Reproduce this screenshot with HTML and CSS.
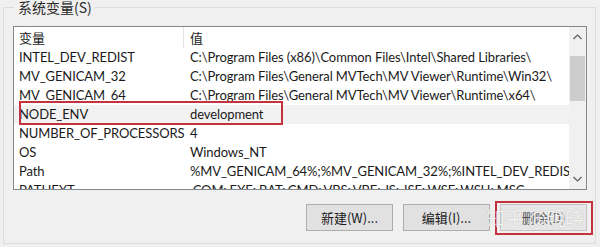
FILE: index.html
```html
<!DOCTYPE html>
<html lang="zh-CN">
	<head>
		<meta charset="UTF-8" />
		<title>系统变量</title>
		<link rel="stylesheet" href="styles.css">
	</head>
	<body>
		<fieldset class="group">
			<legend>系统变量(S)</legend>

			<div class="listbox">
				<div class="rows">
					<div class="row head">
						<span class="name">变量</span>
						<span class="value">值</span>
					</div>
					<div class="row">
						<span class="name">INTEL_DEV_REDIST</span>
						<span class="value">C:\Program Files (x86)\Common Files\Intel\Shared Libraries\</span>
					</div>
					<div class="row">
						<span class="name">MV_GENICAM_32</span>
						<span class="value">C:\Program Files\General MVTech\MV Viewer\Runtime\Win32\</span>
					</div>
					<div class="row">
						<span class="name">MV_GENICAM_64</span>
						<span class="value">C:\Program Files\General MVTech\MV Viewer\Runtime\x64\</span>
					</div>
					<div class="row selected">
						<span class="name">NODE_ENV</span>
						<span class="value">development</span>
						<span class="mark"></span>
					</div>
					<div class="row">
						<span class="name">NUMBER_OF_PROCESSORS</span>
						<span class="value">4</span>
					</div>
					<div class="row">
						<span class="name">OS</span>
						<span class="value">Windows_NT</span>
					</div>
					<div class="row">
						<span class="name">Path</span>
						<span class="value">%MV_GENICAM_64%;%MV_GENICAM_32%;%INTEL_DEV_REDIS...</span>
					</div>
					<div class="row">
						<span class="name">PATHEXT</span>
						<span class="value">.COM;.EXE;.BAT;.CMD;.VBS;.VBE;.JS;.JSE;.WSF;.WSH;.MSC</span>
					</div>
				</div>
				<div class="scrollbar">
					<svg class="arrow" width="9" height="6" viewBox="0 0 9 6"><path d="M0.5 5 L4.5 1 L8.5 5" fill="none" stroke="#606060" stroke-width="1.2"/></svg>
					<div class="track"><div class="thumb"></div></div>
					<svg class="arrow" width="9" height="6" viewBox="0 0 9 6"><path d="M0.5 1 L4.5 5 L8.5 1" fill="none" stroke="#606060" stroke-width="1.2"/></svg>
				</div>
			</div>

			<div class="buttons">
				<button class="btn">新建(W)...</button>
				<button class="btn">编辑(I)...</button>
				<button class="btn delete">删除(D)<span class="mark"></span><span class="watermark">知乎 @明晓</span></button>
			</div>
		</fieldset>
	</body>
</html>
```

FILE: styles.css
```css
* {
	box-sizing: border-box;
	margin: 0;
	padding: 0;
}

body {
	background-color: #f0f0f0;
	font-family: Lato, "Noto Sans CJK SC", sans-serif;
	font-size: 13px;
	color: #1a1a1a;
	width: 600px;
	height: 247px;
	overflow: hidden;
}

.group {
	margin: -2px 4px 0 3px;
	height: 246px;
	border: 1px solid #dcdcdc;
	padding: 10px 8px 0 9px;
}

.group legend {
	margin-left: 1px;
	padding: 0 3px 0 4px;
	font-family: "Noto Sans CJK SC", sans-serif;
	font-size: 14px;
	color: #2a2a2a;
	line-height: 18px;
}

.listbox {
	display: flex;
	height: 164px;
	background: white;
	border: 1px solid #828790;
}

.rows {
	flex: 1;
	overflow: hidden;
}

.row {
	position: relative;
	display: grid;
	grid-template-columns: 170px 1fr;
	height: 19px;
	line-height: 19px;
	white-space: nowrap;
	letter-spacing: -0.1px;
}

.row .name {
	padding-left: 5px;
}

.row .value {
	padding-left: 6px;
	overflow: hidden;
}

.row.head {
	height: 21px;
	line-height: 21px;
	font-family: "Noto Sans CJK SC", sans-serif;
	font-size: 13px;
	letter-spacing: 0;
}

.row.head .name {
	border-right: 1px solid #e5e5e5;
}

.row.selected {
	background-color: #f2f2f2;
}

.row .mark {
	position: absolute;
	left: 5px;
	top: -4px;
	width: 264px;
	height: 24px;
	border: 2px solid #c4323f;
}

.scrollbar {
	width: 17px;
	background: #f0f0f0;
	display: flex;
	flex-direction: column;
	align-items: center;
}

.scrollbar .arrow {
	margin: 7px 0;
}

.track {
	flex: 1;
	width: 100%;
	padding: 9px 1px 0;
}

.thumb {
	height: 45px;
	background: #cdcdcd;
}

.buttons {
	display: flex;
	justify-content: flex-end;
	gap: 10px;
	margin-top: 14px;
}

.btn {
	position: relative;
	width: 87px;
	height: 27px;
	background: #e1e1e1;
	border: 1px solid #adadad;
	font-family: "Noto Sans CJK SC", sans-serif;
	font-size: 13px;
	color: #1a1a1a;
}

.btn.delete {
	background: #e6e6e6;
	border-color: #c4c4c4;
	color: #555;
}

.btn .mark {
	position: absolute;
	left: -6px;
	right: -7px;
	top: -4px;
	bottom: -5px;
	border: 2px solid #c4323f;
}

.watermark {
	position: absolute;
	left: -15px;
	top: 0;
	font-size: 19px;
	line-height: 25px;
	white-space: nowrap;
	color: rgba(255, 255, 255, 0.85);
	text-shadow: 0 0 1px rgba(0, 0, 0, 0.25);
}
```
